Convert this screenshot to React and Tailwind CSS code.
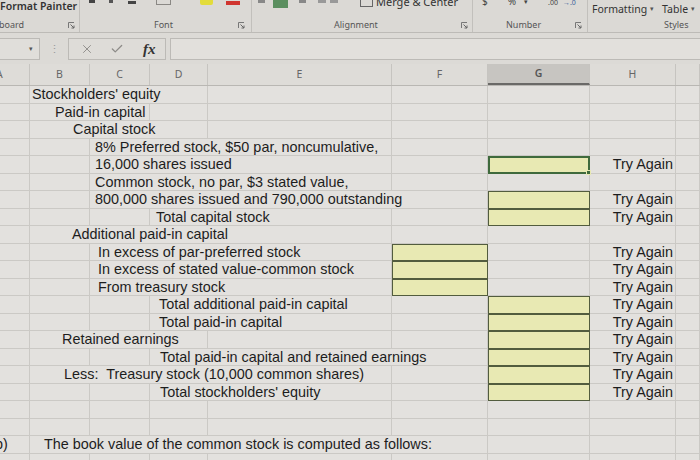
import { X, Check } from "lucide-react";

const gridCols = "grid grid-cols-[30px_60px_60px_58px_184px_96px_102px_86px_1fr]";

const startCls = { 1: "col-start-1", 2: "col-start-2", 3: "col-start-3", 4: "col-start-4" };
const spanCls = { 1: "col-span-1", 2: "col-span-2", 3: "col-span-3", 4: "col-span-4", 5: "col-span-5" };

// from/to = grid columns the text runs over
const rows = [
  { labels: [{ from: 2, to: 4, pad: "pl-[2px]", text: "Stockholders' equity" }] },
  { labels: [{ from: 2, to: 3, pad: "pl-[25px]", text: "Paid-in capital" }] },
  { labels: [{ from: 2, to: 4, pad: "pl-[43px]", text: "Capital stock" }] },
  { labels: [{ from: 3, to: 5, pad: "pl-[5px]", text: "8% Preferred stock, $50 par, noncumulative," }] },
  { labels: [{ from: 3, to: 5, pad: "pl-[5px]", text: "16,000 shares issued" }], g: true, sel: true, h: true },
  { labels: [{ from: 3, to: 5, pad: "pl-[5px]", text: "Common stock, no par, $3 stated value," }] },
  { labels: [{ from: 3, to: 6, pad: "pl-[5px]", text: "800,000 shares issued and 790,000 outstanding" }], g: true, h: true },
  { labels: [{ from: 4, to: 5, pad: "pl-[6px]", text: "Total capital stock" }], g: true, h: true },
  { labels: [{ from: 2, to: 5, pad: "pl-[42px]", text: "Additional paid-in capital" }] },
  { labels: [{ from: 3, to: 5, pad: "pl-[8px]", text: "In excess of par-preferred stock" }], f: true, h: true },
  { labels: [{ from: 3, to: 5, pad: "pl-[8px]", text: "In excess of stated value-common stock" }], f: true, h: true },
  { labels: [{ from: 3, to: 5, pad: "pl-[8px]", text: "From treasury stock" }], f: true, h: true },
  { labels: [{ from: 4, to: 5, pad: "pl-[9px]", text: "Total additional paid-in capital" }], g: true, h: true },
  { labels: [{ from: 4, to: 5, pad: "pl-[9px]", text: "Total paid-in capital" }], g: true, h: true },
  { labels: [{ from: 2, to: 4, pad: "pl-[32px]", text: "Retained earnings" }], g: true, h: true },
  { labels: [{ from: 4, to: 6, pad: "pl-[10px]", text: "Total paid-in capital and retained earnings" }], g: true, h: true },
  { labels: [{ from: 2, to: 5, pad: "pl-[34px]", text: "Less:  Treasury stock (10,000 common shares)" }], g: true, h: true },
  { labels: [{ from: 4, to: 5, pad: "pl-[10px]", text: "Total stockholders' equity" }], g: true, h: true },
  { labels: [] },
  { labels: [] },
  {
    labels: [
      { from: 1, to: 1, pad: "pl-0 -indent-[5px]", text: "b)" },
      { from: 2, to: 6, pad: "pl-[14px]", text: "The book value of the common stock is computed as follows:" },
    ],
  },
  { labels: [] },
];

const Launcher = () => (
  <svg width="7" height="7" viewBox="0 0 7 7" className="shrink-0">
    <path d="M0.5 6V0.5H6" stroke="#777" strokeWidth="1" fill="none" />
    <path d="M2.5 2.5L6 6M6 3.5V6H3.5" stroke="#666" strokeWidth="1" fill="none" />
  </svg>
);

function Ribbon() {
  return (
    <div className="flex h-[33px] border-b border-[#bdbbb7] bg-[#dbd9d5] text-[#333] font-['Noto_Sans',sans-serif]">
      {/* Clipboard */}
      <div className="flex w-[80px] flex-col border-r border-[#c2c0bc]">
        <div className="h-[18px] overflow-hidden">
          <div className="whitespace-nowrap text-[10.5px] font-semibold leading-[12px]">Format Painter</div>
        </div>
        <div className="flex items-center justify-between pr-[4px] text-[9px] leading-[14px] text-[#555]">
          <span className="-ml-[1px]">board</span>
          <Launcher />
        </div>
      </div>
      {/* Font */}
      <div className="flex w-[172px] flex-col border-r border-[#c2c0bc]">
        <div className="flex h-[18px] items-start">
          <div className="ml-[9px] h-[3px] w-[6px] bg-[#444]" />
          <div className="ml-[14px] h-[3px] w-[4px] bg-[#555]" />
          <div className="ml-[15px] mt-[1px] h-[3px] w-[8px] bg-[#444]" />
          <div className="ml-[20px] h-[5px] w-[15px] border border-t-0 border-[#8a8884]" />
          <div className="ml-[29px] h-[5px] w-[13px] rounded-b-[2px] bg-[#e3dc3a]" />
          <div className="ml-[13px] mt-[1px] h-[4px] w-[14px] bg-[#d0352f]" />
        </div>
        <div className="flex items-center pr-[6px] text-[9px] leading-[14px] text-[#555]">
          <span className="flex-1 pl-[74px]">Font</span>
          <Launcher />
        </div>
      </div>
      {/* Alignment */}
      <div className="flex w-[221px] flex-col border-r border-[#c2c0bc]">
        <div className="flex h-[18px] items-start">
          <div className="ml-[6px] h-[3px] w-[7px] bg-[#888]" />
          <div className="ml-[8px] h-[8px] w-[15px] bg-[#5b8f5f]" />
          <div className="ml-[11px] h-[3px] w-[7px] bg-[#888]" />
          <div className="ml-[12px] h-[3px] w-[8px] bg-[#999]" />
          <div className="ml-[4px] h-[3px] w-[8px] bg-[#999]" />
          <div className="ml-[22px] h-[7px] w-[13px] border border-t-0 border-[#666]" />
          <div className="-mt-[5px] ml-[3px] whitespace-nowrap text-[11px] leading-[14px] text-[#333]">Merge &amp; Center</div>
        </div>
        <div className="flex items-center pr-[4px] text-[9px] leading-[14px] text-[#555]">
          <span className="flex-1 pl-[82px]">Alignment</span>
          <Launcher />
        </div>
      </div>
      {/* Number */}
      <div className="flex w-[115px] flex-col border-r border-[#c2c0bc]">
        <div className="flex h-[18px] items-start text-[10px] leading-[10px] text-[#444]">
          <span className="-mt-[4px] ml-[9px]">$</span>
          <span className="-mt-[4px] ml-[20px]">%</span>
          <span className="-mt-[3px] ml-[8px] text-[7px]">▾</span>
          <span className="-mt-[2px] ml-[20px] text-[7px]">.00</span>
          <span className="-mt-[2px] ml-[5px] text-[7px] text-[#3a5f9a]">→.0</span>
        </div>
        <div className="flex items-center pr-[5px] text-[9px] leading-[14px] text-[#555]">
          <span className="flex-1 pl-[33px]">Number</span>
          <Launcher />
        </div>
      </div>
      {/* Styles */}
      <div className="flex flex-1 flex-col">
        <div className="flex h-[18px] items-center whitespace-nowrap text-[10.5px] leading-[14px] text-[#333]">
          <span className="ml-[4px]">Formatting</span>
          <span className="ml-[3px] text-[7px] text-[#555]">▾</span>
          <span className="ml-[8px]">Table</span>
          <span className="ml-[3px] text-[7px] text-[#555]">▾</span>
        </div>
        <div className="pl-[76px] text-[9px] leading-[14px] text-[#555]">Styles</div>
      </div>
    </div>
  );
}

function FormulaBar() {
  return (
    <div className="bg-[#dcdad6] pt-[5px] pb-[4px]">
      <div className="flex h-[22px]">
        <div className="flex w-[40px] items-center justify-end border border-l-0 border-[#bcbab6] bg-[#e0deda] pr-[6px] text-[7px] text-[#555]">▾</div>
        <div className="flex w-[28px] items-center justify-center text-[11px] text-[#999]">⋮</div>
        <div className="flex w-[98px] items-center border border-[#bcbab6] bg-[#dedcd8]">
          <X className="ml-[11px] h-[14px] w-[14px] text-[#8d8b88]" strokeWidth={1.6} />
          <Check className="ml-[16px] h-[14px] w-[14px] text-[#8d8b88]" strokeWidth={2.2} />
          <span className="ml-[19px] font-['Liberation_Serif',serif] text-[15px] font-bold italic leading-none text-[#333]">fx</span>
        </div>
        <div className="ml-[4px] flex-1 border border-r-0 border-[#bcbab6] bg-[#e2e0dc]" />
      </div>
    </div>
  );
}

function ColumnHeaders() {
  const letters = ["A", "B", "C", "D", "E", "F", "G", "H", ""];
  return (
    <div className={`${gridCols} h-[22px] border-b border-[#b9b7b3] bg-[#dedcd8] font-['Noto_Sans',sans-serif] text-[10.5px] text-[#666]`}>
      {letters.map((l, i) =>
        l === "G" ? (
          <div key={i} className="flex items-center justify-center border-r border-b-2 border-[#c6c4c0] border-b-[#6a6967] bg-[#c7c5c1] font-semibold text-[#555]">
            {l}
          </div>
        ) : l === "A" ? (
          <div key={i} className="flex items-center border-r border-[#c6c4c0] -indent-[4px]">{l}</div>
        ) : (
          <div key={i} className="flex items-center justify-center border-r border-[#c6c4c0]">{l}</div>
        )
      )}
    </div>
  );
}

function Row({ row }) {
  const cells = [];
  for (let c = 1; c <= 9; c++) {
    const lab = row.labels.find((l) => l.from === c);
    if (lab) {
      cells.push(
        <div
          key={c}
          className={`${startCls[lab.from]} ${spanCls[lab.to - lab.from + 1]} ${lab.pad} flex items-center whitespace-pre border-r border-b border-[#cbc9c5] leading-none`}
        >
          {lab.text}
        </div>
      );
      c = lab.to;
      continue;
    }
    const yellow = (c === 6 && row.f) || (c === 7 && row.g);
    if (yellow && row.sel) {
      cells.push(
        <div key={c} className="relative border-2 border-[#3f6a3c] bg-[#e8e9b3]">
          <div className="absolute -right-[3px] -bottom-[3px] h-[5px] w-[5px] border border-[#e8e9b3] bg-[#3f6a3c]" />
        </div>
      );
    } else if (yellow) {
      cells.push(<div key={c} className="bg-[#e8e9b3] shadow-[inset_0_0_0_1px_#525c3e]" />);
    } else if (c === 8 && row.h) {
      cells.push(
        <div key={c} className="flex items-center justify-end border-r border-b border-[#cbc9c5] pr-[2px] leading-none">
          Try Again
        </div>
      );
    } else {
      cells.push(<div key={c} className="border-r border-b border-[#cbc9c5]" />);
    }
  }
  return <div className={`${gridCols} h-[17.5px]`}>{cells}</div>;
}

export default function App() {
  return (
    <div className="h-[460px] w-[700px] overflow-hidden bg-[#e3e1de]">
      <Ribbon />
      <FormulaBar />
      <ColumnHeaders />
      <div className="font-['Liberation_Sans',Arial,sans-serif] text-[14.4px] text-[#1d1d1d]">
        {rows.map((r, i) => (
          <Row key={i} row={r} />
        ))}
      </div>
    </div>
  );
}
